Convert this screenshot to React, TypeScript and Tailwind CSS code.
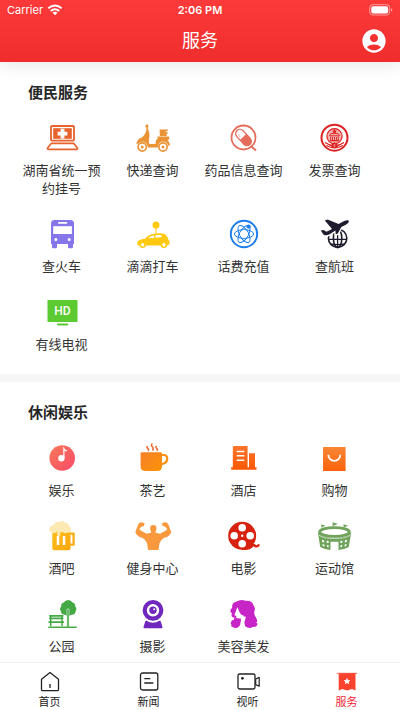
import React, { useState } from 'react';
import { MdAccountCircle } from 'react-icons/md';

interface Service {
  name: string;
  icon: React.ReactNode;
}

interface Tab {
  name: string;
  icon: React.ReactNode;
}

const Icon = ({ children }: { children: React.ReactNode }) => (
  <svg viewBox="0 0 32 32" className="h-8 w-8 shrink-0 overflow-visible" fill="none" aria-hidden="true">
    {children}
  </svg>
);

const LaptopIcon = () => (
  <Icon>
    <rect x="5" y="4" width="23" height="14.6" rx="1" stroke="#e8622e" strokeWidth="1.8" />
    <rect x="7.2" y="6.2" width="18.6" height="10.6" fill="#e8622e" />
    <path d="M14.6 6.8h3.8v3h3v3.6h-3v3h-3.8v-3h-3V9.800h3z" fill="#fff" />
    <path d="M5.200 21.400h22.600l3.600 4.600q.4 1.400-1 1.400H2.600q-1.400 0-1-1.400z" stroke="#e8622e" strokeWidth="1.700" strokeLinejoin="round" />
  </Icon>
);

const ScooterIcon = () => (
  <Icon>
    <g fill="#ea9436">
      <path d="M7.800 4.500l2-2.300 1.500.6-.2 4.400q2.200 5.500.9 10.300-.6 2.400.4 4.600h6.200q-.3-4 2.200-5.600l-.4-2h11.800v3l-1.700.5q2.600 2.500 2.300 5.800l-1.600-.4q-1.400-3.800-5.200-3.800-4.400 0-5.200 5.800H10.800q-.5-5-5-5.900-3.300 0-5 2.600l-1.500-.5q1.400-5.200 5.300-5.800 4-3.200 4.700-7.800l.2-2.500z" />
      <path d="M22.600 7.400h8.900l-1.900 2.200h-1.800l3.600 1.300-1.700 1.200v2h-6.900z" />
    </g>
    <circle cx="5.200" cy="25" r="4.100" fill="#fff" stroke="#ea9436" strokeWidth="1.700" />
    <circle cx="5.200" cy="25" r="1.500" fill="#ea9436" />
    <circle cx="26" cy="25" r="4.100" fill="#fff" stroke="#ea9436" strokeWidth="1.700" />
    <circle cx="26" cy="25" r="1.500" fill="#ea9436" />
  </Icon>
);

const PillIcon = () => (
  <Icon>
    <circle cx="15.500" cy="15.500" r="12" stroke="#e66d5c" strokeWidth="1.800" />
    <path d="M23.500 24.500l4.500 4" stroke="#e66d5c" strokeWidth="2" />
    <g transform="rotate(-43 15.500 15.500)">
      <rect x="11.200" y="6" width="8.600" height="19" rx="4.300" stroke="#e66d5c" strokeWidth="1.300" />
      <path d="M11.200 14.800h8.600v5.900a4.300 4.300 0 0 1-8.600 0z" fill="#e66d5c" />
      <path d="M13.500 9.400v3.500" stroke="#e66d5c" strokeWidth=".6" />
    </g>
  </Icon>
);

const InvoiceIcon = () => (
  <Icon>
    <g stroke="#dc2323">
      <circle cx="15.500" cy="15.700" r="13" strokeWidth="2" />
      <circle cx="15.500" cy="14.200" r="7.600" strokeWidth="1.200" fill="#f7b4b0" />
      <path d="M6 20.500q9.500 6.600 19 0M7.200 23.500q8.300 4.500 16.600 0M12.500 24l3-3 3 3-3 2z" strokeWidth="1.300" />
      <path d="M10.500 13.800l1.300-2.200h7.400l1.300 2.200zM11.700 14.500v4h7.600v-4M13.500 15v3.200M15.500 15v3.200M17.500 15v3.200M10.500 18.800h10" strokeWidth=".9" />
    </g>
    <path d="M15.500 7l.8 1.600 1.700.2-1.300 1.200.4 1.700-1.600-.9-1.600.9.400-1.700L13 8.800l1.700-.2z" fill="#dc2323" />
  </Icon>
);

const BusIcon = () => (
  <Icon>
    <path d="M8.500 2h16Q28 2 28 5.500V26H5V5.500Q5 2 8.500 2z" fill="#8577ea" />
    <path d="M6 25.500h5V29q0 1.200-1.200 1.200H7.200Q6 30.200 6 29zM22 25.500h5V29q0 1.200-1.200 1.200h-2.600Q22 30.200 22 29z" fill="#8577ea" />
    <rect x="12" y="4" width="9.300" height="1.700" rx=".8" fill="#fff" />
    <rect x="7.200" y="8.200" width="18.700" height="7.800" fill="#fff" />
    <circle cx="9.800" cy="21.500" r="1.500" fill="#fff" />
    <circle cx="23.200" cy="21.500" r="1.500" fill="#fff" />
  </Icon>
);

const TaxiIcon = () => (
  <Icon>
    <circle cx="19" cy="7" r="3.500" fill="#ffc90f" />
    <path d="M19 10v6" stroke="#ffc90f" strokeWidth="1" />
    <path d="M.4 24.500q.6-3.200 7.600-3.800 4.300-4.600 8.500-4.900 7.500-1 11.500.2 3.200 3.300 3.600 6l.9 1.200v3l-2.300 1.300H1.800L.2 26.500z" fill="#ffc90f" />
    <path d="M11 20.200q3-2.600 6.200-2.900l-.3 2.600zM18.500 17.200q4-.4 5.500.1l1.200 1.800-6.800.6z" fill="#fff" />
    <circle cx="5.600" cy="26.700" r="2.500" fill="#fff" stroke="#ffc90f" strokeWidth="1.500" />
    <circle cx="26.800" cy="26.700" r="2.500" fill="#fff" stroke="#ffc90f" strokeWidth="1.500" />
  </Icon>
);

const AtomIcon = () => (
  <Icon>
    <g stroke="#1c7eea">
      <circle cx="16" cy="16" r="13.200" strokeWidth="1.900" />
      <ellipse cx="16" cy="16" rx="9.600" ry="4.300" strokeWidth="1" />
      <ellipse cx="16" cy="16" rx="9.600" ry="4.300" strokeWidth="1" transform="rotate(60 16 16)" />
      <ellipse cx="16" cy="16" rx="9.600" ry="4.300" strokeWidth="1" transform="rotate(120 16 16)" />
    </g>
    <circle cx="16" cy="16" r="3.800" fill="#fff" />
    <circle cx="20.600" cy="8.600" r="2.100" fill="#1c7eea" />
  </Icon>
);

const FlightIcon = () => (
  <Icon>
    <g stroke="#1e1b2c" strokeWidth="1.600">
      <circle cx="18.600" cy="20.300" r="9.200" />
      <ellipse cx="18.600" cy="20.300" rx="4.200" ry="9.200" />
      <path d="M18.600 11v18.500M9.500 21.300h18.200M11.500 26q7 1.400 14.200 0" strokeWidth="1.300" />
    </g>
    <path
      d="M1.700 12.400l2.800-.5 3 1.900 5.500-2.900L5.800 2.500 8.600 1.600l11 4.300 5.600-2.900q3.600-1.400 4.800 0 0 2-3.200 3.700l-4.500 2.400-3.500 6.500-2 .6-.4-3.600-6.200 3.800q-3.200 1.500-5.500.3z"
      fill="#1e1b2c"
      stroke="#fff"
      strokeWidth="2.800"
      paintOrder="stroke"
    />
  </Icon>
);

const HdTvIcon = () => (
  <Icon>
    <rect x="1.500" y="4" width="30" height="22" rx=".6" fill="#5bcb31" />
    <rect x="11" y="27.600" width="11.300" height="1.800" rx=".8" fill="#5bcb31" />
    <text x="16.500" y="19.400" textAnchor="middle" fill="#fff" className="font-['Roboto'] text-[12px] font-medium">
      HD
    </text>
  </Icon>
);

const MusicIcon = () => (
  <Icon>
    <defs>
      <linearGradient id="music" x1="0" y1="0" x2="1" y2="1">
        <stop stopColor="#f9795a" />
        <stop offset="1" stopColor="#f74a68" />
      </linearGradient>
    </defs>
    <circle cx="16.200" cy="16" r="12.800" fill="url(#music)" />
    <circle cx="15.400" cy="16.200" r="3.200" fill="#fff" />
    <path d="M17.900 16V6.700q1 1.800 3.200 2.300" stroke="#fff" strokeWidth="1.200" />
  </Icon>
);

const TeaIcon = () => (
  <Icon>
    <defs>
      <linearGradient id="tea" x1="0" y1="0" x2="1" y2="1">
        <stop stopColor="#f7802a" />
        <stop offset="1" stopColor="#fc9306" />
      </linearGradient>
    </defs>
    <path d="M24.500 13h2.300q3.400 0 3.400 3.800 0 3.700-3.400 4.700l-2.800.8" stroke="#fb9015" strokeWidth="2.200" />
    <path d="M5 10.300h18.800q1.200 0 1.200 1.200v12.700q0 4.900-4.900 4.900H8.500q-4.900 0-4.900-4.900V11.500q0-1.200 1.400-1.200z" fill="url(#tea)" />
    <path d="M10.700 4.200q-1.500 1 0 2.200t.2 2.300M15.500 1.500q-2 1.600-.2 3.200t.2 4M19.700 4.200q-1.500 1 0 2.200t.2 2.300" stroke="#ee6b32" strokeWidth="1.500" />
  </Icon>
);

const HotelIcon = () => (
  <Icon>
    <defs>
      <linearGradient id="hotel" x1="0" y1="0" x2="0" y2="1">
        <stop stopColor="#f9752d" />
        <stop offset="1" stopColor="#fc5804" />
      </linearGradient>
    </defs>
    <path d="M5.600 4h14v21.200H21V11.300h6v13.900h1.500v2.500H3.200v-2.500h1.600V5z" fill="url(#hotel)" />
    <path d="M8.700 9.500h7.600M8.700 13.800h7.600M8.700 18.200h7.600" stroke="#fff" strokeWidth="1.600" />
  </Icon>
);

const ShoppingIcon = () => (
  <Icon>
    <defs>
      <linearGradient id="shopping" x1="0" y1="0" x2="0" y2="1">
        <stop stopColor="#f98634" />
        <stop offset="1" stopColor="#fc630b" />
      </linearGradient>
    </defs>
    <rect x="4" y="5" width="22.600" height="24" rx=".6" fill="url(#shopping)" />
    <path d="M9.300 12.800a6 6 0 0 0 12 0" stroke="#fff" strokeWidth="1.800" />
  </Icon>
);

const BeerIcon = () => (
  <Icon>
    <defs>
      <linearGradient id="beer" x1="0" y1="0" x2="1" y2="1">
        <stop stopColor="#fbc11f" />
        <stop offset="1" stopColor="#fba60c" />
      </linearGradient>
    </defs>
    <path d="M23 13.700h4.600v11H23" stroke="#fbad15" strokeWidth="2.300" />
    <path d="M6.300 8.500h18.200v20q0 1.800-1.800 1.800H8.100q-1.800 0-1.800-1.800z" fill="url(#beer)" />
    <path d="M5.500 12.500Q2.500 11 3.500 7.700 5 5 7.700 5 9.300 1 13.300 2q3.500-2.300 6.300.9 3.700.3 4 3.800 2.200 1.500 1.400 4.800-1.500 2.200-3.500.8-2.500 2.200-4.700-.3-1.800 1-2.600-.6v4q-1.600 1.200-3-.2v-4q-2.200 3-5.700 1.300z" fill="#fdeab3" />
    <path d="M11.300 16.500h1.400v8h-1.400zM17.300 16.500h1.400v8h-1.400z" stroke="#fff" strokeWidth="1.100" fill="#fff" />
  </Icon>
);

const MuscleIcon = () => (
  <Icon>
    <path d="M13.200 9.200V7.500Q13.200 5 16.300 5t3.100 2.500v1.700l-.8 2.300v1.300l4.600.9 2.800-1.600q3-.8 4.300-3l-2.400-2.700-2.300-.5-.6-2.600 2.600-1.100q3 .2 3.600 1.700l2.900 7.500q.2 2-1.300 3.400-2.200 2.600-5.600 3-3 1.700-4.700 5.400l-1 6.900H11.100l-1-6.900q-1.700-3.700-4.700-5.400-3.400-.4-5.600-3-1.500-1.400-1.300-3.400l2.900-7.500Q2 2.400 5 2.200l2.600 1.100L7 5.900l-2.300.5-2.400 2.700q1.300 2.200 4.300 3l2.800 1.600 4.600-.9v-1.300z" fill="#fa983e" />
  </Icon>
);

const FilmIcon = () => (
  <Icon>
    <circle cx="14.200" cy="15.800" r="14" fill="#d6220f" />
    <path d="M15 28.800q6 .8 9.600-3 1.600-1.700 2.700.3 2 .9 3.300-.9" stroke="#d6220f" strokeWidth="2.300" strokeLinecap="round" />
    <g fill="#fff">
      <circle cx="14.200" cy="7.800" r="3.800" />
      <circle cx="14.200" cy="23.800" r="3.800" />
      <circle cx="6.200" cy="15.800" r="3.800" />
      <circle cx="22.200" cy="15.800" r="3.800" />
      <circle cx="14.200" cy="15.800" r="1.200" />
    </g>
  </Icon>
);

const StadiumIcon = () => (
  <Icon>
    <path d="M-1.300 11.500q1.700 4.400 8.800 5.600 8 1.200 16 0 7.100-1.200 8.800-5.600L29.800 27q-4 2.500-10.300 3v-8.300h-8V30Q5.300 29.500 1.200 27z" fill="#70a45d" />
    <ellipse cx="15.500" cy="12" rx="14.800" ry="4.300" fill="#fff" stroke="#70a45d" strokeWidth="2.800" />
    <path d="M0 15.200q4 3.300 15.500 3.300T31 15.200" stroke="#fff" strokeWidth=".6" />
    <path d="M3 19.700l2 .6.200 2.300-1.900-.5zM7.600 20.700l2 .3v2.100l-1.900-.3zM3.400 24l1.900.6.2 1.900-1.700-.5zM7.800 25l1.800.3v2l-1.600-.3zM28 19.700l-2 .6-.2 2.300 1.900-.5zM23.400 20.700l-2 .3v2.100l1.900-.3zM27.600 24l-1.900.6-.2 1.900 1.700-.5zM23.200 25l-1.800.3v2l1.600-.3z" fill="#fff" />
    <path d="M2.300 7.500V4.200l4.200 1.600-3.400 1.400v.3zM13.600 7V2.200L19 4.100l-4.600 1.700V7zM24.500 7.500V4.200l4.700 1.600-3.900 1.400v.3z" fill="#70a45d" />
  </Icon>
);

const ParkIcon = () => (
  <Icon>
    <path d="M22.200 2q3 0 4.300 2.600 3 .7 2.700 3.700 2.200 2.700.3 5.200-.4 3.300-3.700 3.300-3.300 2.300-7 0-3.400-.2-3.800-3.400-2-2.600.2-5-.3-3.300 2.600-3.900Q19.300 2 22.200 2z" fill="#44a945" />
    <path d="M20.900 11h2.200v18h-2.200z" fill="#44a945" stroke="#fff" strokeWidth=".5" />
    <path d="M3.200 17.800h14.200M3.200 20.400h14.200M2.500 24.200h15.600" stroke="#44a945" strokeWidth="1.800" />
    <path d="M4.700 17v11M16 17v11M2.300 29.200h28.400" stroke="#44a945" strokeWidth="1.500" />
  </Icon>
);

const WebcamIcon = () => (
  <Icon>
    <circle cx="16" cy="12.300" r="8.300" stroke="#6f27bd" strokeWidth="4.200" />
    <circle cx="16" cy="12.300" r="3.700" fill="#6f27bd" />
    <circle cx="17.200" cy="11.200" r="1" fill="#fff" />
    <path d="M9.500 22.700q6.500 4 13 0l1.100.3 1.900 6q.1 1.200-1.100 1.200H7.600q-1.200 0-1.100-1.200l1.900-6z" fill="#6f27bd" />
  </Icon>
);

const HairIcon = () => (
  <Icon>
    <path d="M4 15.500q-3.500-3 .2-5.700Q3.500 4.500 8.500 3.500 13 .8 17.500 2.800q6.500-.8 8 4.400 2.500 3.300.6 6.800 0 3.500 2.200 6.300 2 3.300-.3 4.500 1.500.3 1.500 1.200-.8 3.500-4.500 2.800-3 2.200-6.200.5-3-1.600-2.200-6l1-3 .1-1.700-2.300-.2q-3 .6-2.900 2 1 2-.1 4.300.2 4-3.600 5.200-3 .8-5.300-1.600-1.200-1.200.7-1.700Q2 26.500 3 24.300q.3-2.200 2.800-2.600l.7-1.900-2.300-.7q-1.300-1.700-.2-3.600z" fill="#c725c5" />
    <path d="M9.700 9.200q.9 4.600 3.300 7.200l2.800 1.300-.4 1.800-4 .9-3.300-.3.300-1.800-2-1.400 1.500-3.600q.3-2.400 1.800-4.100z" fill="#fff" />
  </Icon>
);

const convenience: Service[] = [
  { name: '湖南省统一预约挂号', icon: <LaptopIcon /> },
  { name: '快递查询', icon: <ScooterIcon /> },
  { name: '药品信息查询', icon: <PillIcon /> },
  { name: '发票查询', icon: <InvoiceIcon /> },
  { name: '查火车', icon: <BusIcon /> },
  { name: '滴滴打车', icon: <TaxiIcon /> },
  { name: '话费充值', icon: <AtomIcon /> },
  { name: '查航班', icon: <FlightIcon /> },
  { name: '有线电视', icon: <HdTvIcon /> },
];

const leisure: Service[] = [
  { name: '娱乐', icon: <MusicIcon /> },
  { name: '茶艺', icon: <TeaIcon /> },
  { name: '酒店', icon: <HotelIcon /> },
  { name: '购物', icon: <ShoppingIcon /> },
  { name: '酒吧', icon: <BeerIcon /> },
  { name: '健身中心', icon: <MuscleIcon /> },
  { name: '电影', icon: <FilmIcon /> },
  { name: '运动馆', icon: <StadiumIcon /> },
  { name: '公园', icon: <ParkIcon /> },
  { name: '摄影', icon: <WebcamIcon /> },
  { name: '美容美发', icon: <HairIcon /> },
];

const tabs: Tab[] = [
  {
    name: '首页',
    icon: (
      <path d="M2.500 8.200L11 1.600l8.500 6.600v10.600q0 .8-.8.800H3.300q-.8 0-.8-.8zM11 13v4" stroke="currentColor" strokeWidth="1.300" strokeLinejoin="round" />
    ),
  },
  {
    name: '新闻',
    icon: (
      <>
        <rect x="2.500" y="2" width="17.300" height="17" rx="2" stroke="currentColor" strokeWidth="1.300" />
        <path d="M6.300 7.700h6M6.300 12h9" stroke="currentColor" strokeWidth="1.300" />
      </>
    ),
  },
  {
    name: '视听',
    icon: (
      <>
        <rect x="1" y="3" width="17" height="15" rx="1.800" stroke="currentColor" strokeWidth="1.300" />
        <path d="M18.700 8l3.500-1.600v8.800l-3.500-1.600z" stroke="currentColor" strokeWidth="1.200" strokeLinejoin="round" />
        <circle cx="5.400" cy="7.300" r="1.400" fill="currentColor" />
      </>
    ),
  },
  {
    name: '服务',
    icon: (
      <>
        <path d="M.8 2.300h20.400" stroke="#f6694f" strokeWidth="1" />
        <path d="M2.700 2.300h16.800v17.200L16 18l-4.900 1.600L6.200 18l-3.500 1.500z" fill="#f9432f" />
        <path d="M11 6.800l1 2.200 2.400.3-1.800 1.600.5 2.400-2.100-1.200-2.100 1.200.5-2.400-1.800-1.600L10 9z" fill="#fff" />
      </>
    ),
  },
];

const ServiceSection = ({ title, services, className }: { title: string; services: Service[]; className: string }) => (
  <section className={`pt-[19px] ${className}`}>
    <h2 className="pl-7 text-[15px] leading-6 font-bold text-[#262626]">{title}</h2>
    <div className="mt-[17px] grid grid-cols-4 gap-y-[21px] pr-5 pl-4">
      {services.map(service => (
        <button key={service.name} className="flex flex-col items-center justify-start gap-[7px] px-1">
          {service.icon}
          <span className="text-[13px] leading-[18px] text-[#333]">{service.name}</span>
        </button>
      ))}
    </div>
  </section>
);

export default function App() {
  const [activeTab, setActiveTab] = useState('服务');

  return (
    <div className="flex min-h-screen flex-col bg-white font-['Inter','Noto_Sans_CJK_SC',sans-serif]">
      <header className="relative bg-linear-to-b from-[#fb3a39] to-[#ef2d2d] text-white shadow-[0_4px_16px_rgba(0,0,0,0.09)]">
        <div className="grid h-5 grid-cols-3 items-center px-[7px] text-[11px]">
          <div className="flex items-center gap-1">
            <span>Carrier</span>
            <svg viewBox="0 0 16 12" className="h-3 w-4" fill="none" aria-hidden="true">
              <path d="M1.300 4.300q6.700-5.600 13.400 0M3.700 7q4.300-3.700 8.600 0" stroke="#fff" strokeWidth="1.900" />
              <path d="M5.500 8.700q2.500-1.900 5 0L8 11.300z" fill="#fff" />
            </svg>
          </div>
          <span className="text-center font-semibold">2:06 PM</span>
          <svg viewBox="0 0 24 12" className="h-3 w-6 justify-self-end" fill="none" aria-hidden="true">
            <rect x=".7" y=".7" width="20" height="10.300" rx="3" stroke="#fff" strokeOpacity=".5" />
            <rect x="2.300" y="2.300" width="16.800" height="7.100" rx="1.700" fill="#fff" />
            <path d="M22 4.300q1.400.4 1.400 1.600T22 7.500z" fill="#fff" fillOpacity=".5" />
          </svg>
        </div>
        <div className="grid h-[42px] grid-cols-3 items-center px-3">
          <h1 className="col-start-2 text-center text-lg font-normal">服务</h1>
          <button className="justify-self-end" aria-label="个人中心">
            <MdAccountCircle className="h-7 w-7" />
          </button>
        </div>
      </header>

      <main className="flex-1">
        <ServiceSection title="便民服务" services={convenience} className="pb-[21px]" />
        <div className="h-2 bg-[#f6f6f6]" />
        <ServiceSection title="休闲娱乐" services={leisure} className="pb-1" />
      </main>

      <nav className="sticky bottom-0 grid h-12 grid-cols-4 border-t border-[#f2f2f2] bg-white pr-1">
        {tabs.map(tab => (
          <button
            key={tab.name}
            onClick={() => setActiveTab(tab.name)}
            className={`flex flex-col items-center gap-px pt-2 ${activeTab === tab.name ? 'text-[#ee2434]' : 'text-[#222]'}`}
          >
            <svg viewBox="0 0 22 22" className="h-[22px] w-[22px] overflow-visible" fill="none" aria-hidden="true">
              {tab.icon}
            </svg>
            <span className="text-[11px] leading-4">{tab.name}</span>
          </button>
        ))}
      </nav>
    </div>
  );
}
